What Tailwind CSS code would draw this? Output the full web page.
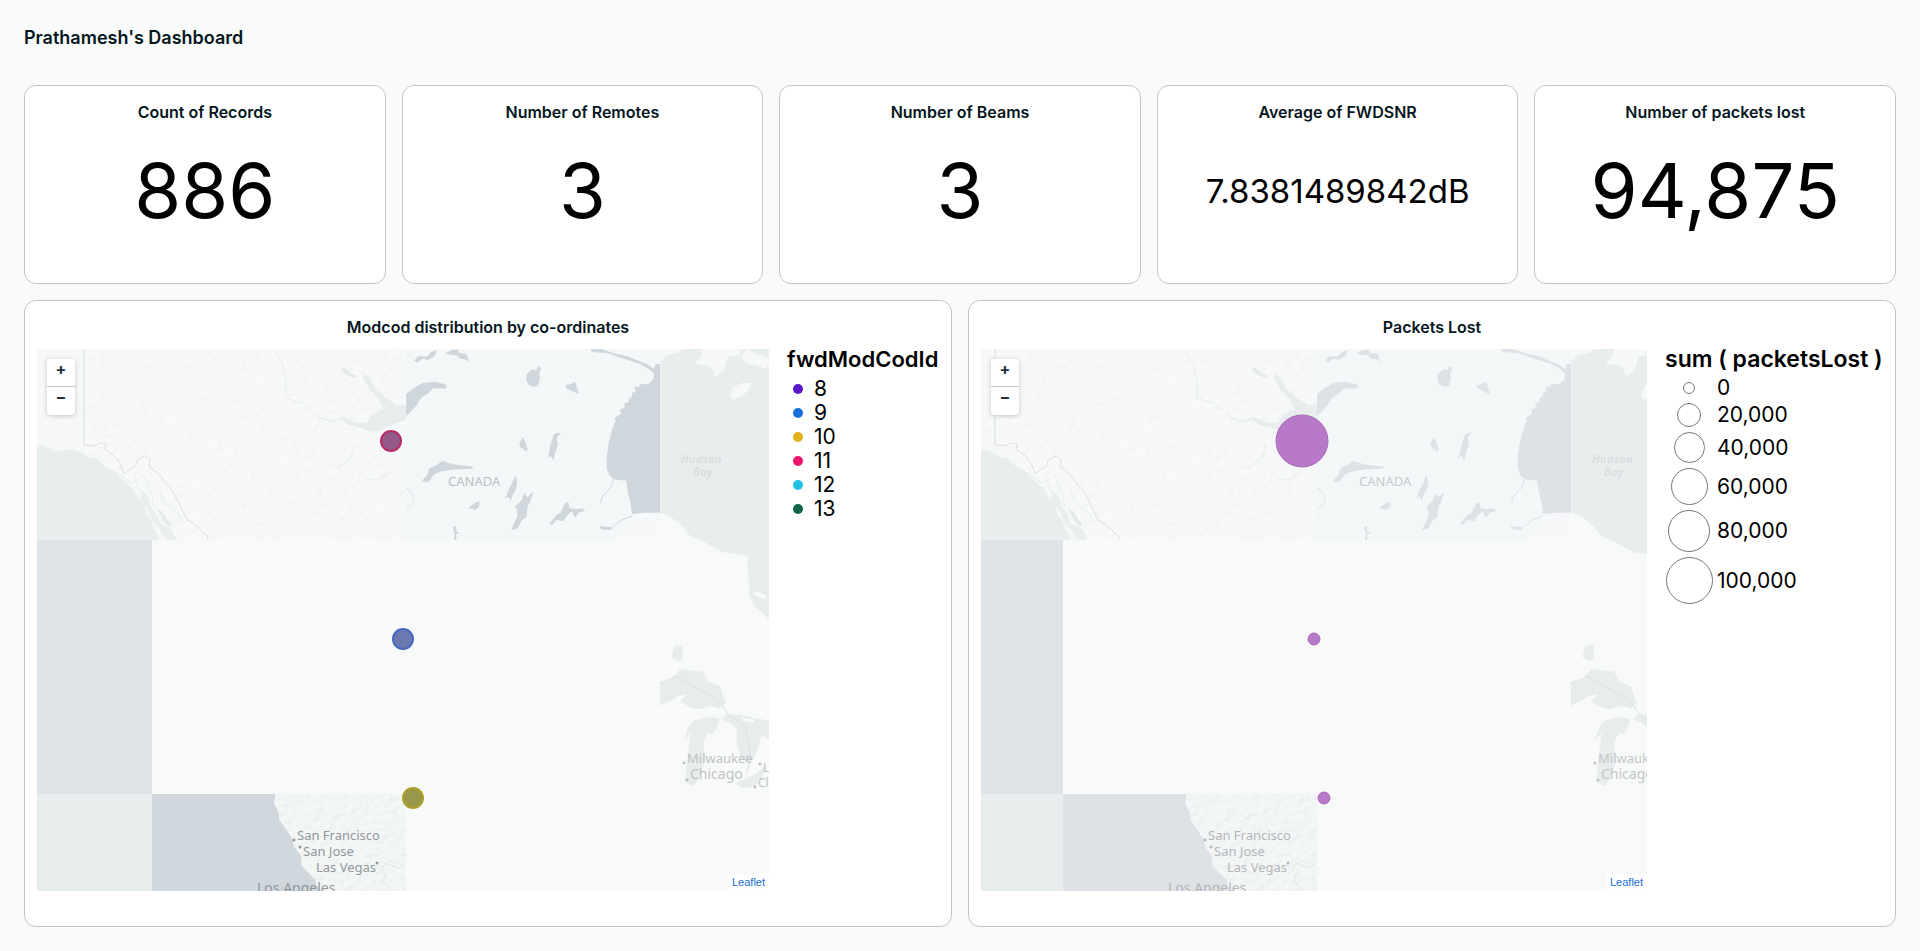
<!DOCTYPE html>
<html lang="en">
  <head>
    <meta charset="UTF-8" />
    <meta name="viewport" content="width=device-width, initial-scale=1.0" />
    <title>Prathamesh's Dashboard</title>
    <script src="https://cdn.jsdelivr.net/npm/@tailwindcss/browser@4"></script>
  </head>
  <body
    class="bg-[#f9fbfa] min-h-screen flex flex-col px-6 pb-6 font-['Inter',sans-serif] text-black"
  >
    <!-- Base map, shared by both charts. currentColor = open water -->
    <svg class="absolute w-0 h-0" aria-hidden="true">
      <defs>
        <filter id="relief" x="0" y="0" width="100%" height="100%">
          <feTurbulence type="fractalNoise" baseFrequency="0.12 0.16" numOctaves="4" seed="4" />
          <feDiffuseLighting lighting-color="#ffffff" surfaceScale="3" result="light">
            <feDistantLight azimuth="225" elevation="60" />
          </feDiffuseLighting>
          <feComposite in="light" in2="SourceAlpha" operator="in" />
        </filter>
        <clipPath id="clip-nw"><rect width="369" height="191" /></clipPath>
        <clipPath id="clip-ne"><rect x="369" width="254" height="191" /></clipPath>
        <clipPath id="clip-east"><rect x="623" width="109" height="542" /></clipPath>
        <clipPath id="clip-sw"><rect x="115" y="445" width="254" height="97" /></clipPath>

        <symbol id="basemap" viewBox="0 0 732 542">
          <rect width="732" height="542" fill="#f8faf9" />

          <!-- north west: Alaska, Yukon, British Columbia -->
          <g clip-path="url(#clip-nw)">
            <rect width="369" height="191" fill="#f7f9fa" />
            <rect width="369" height="191" filter="url(#relief)" opacity=".05" />
            <g transform="translate(-17 -59) scale(.33333)">
              <path
                d="M50 462L80 470L105 487L150 478L185 485L200 500L232 505L245 522L285 545L302 565L325 585L342 600L352 625L372 645L378 668L392 690L405 720L420 750H50Z"
                fill="#e8eded"
              />
              <path
                d="M365 600L385 620L392 650L410 675L420 700L455 720L470 750H440L425 725L400 700L385 660L360 630Z"
                fill="#eaeeef"
              />
              <path
                d="M412 655L430 668L442 690L455 700L448 712L428 690Z"
                fill="#e4e9ea"
              />
              <path
                d="M192 175V465L228 466L240 458L258 462L255 478L285 500L300 520L312 550L345 530L352 510L375 497L390 508L388 530L420 555L440 585L455 600L475 635L500 688L530 708L563 740V750"
                fill="none"
                stroke="#dcdfe1"
                stroke-width="3"
              />
              <path
                d="M760 180L785 215L797 265L798 325L850 340L880 362"
                fill="none"
                stroke="#e9edef"
                stroke-width="3"
              />
              <path
                d="M345 560L362 610L385 640M370 555L395 610L400 650M300 555L335 580L350 570M420 600L432 640L470 665L490 700"
                fill="none"
                stroke="#e9edee"
                stroke-width="3"
              />
              <path
                d="M880 360L900 382L935 392L968 380L1000 395L1040 400L1055 375L1090 358L1078 330L1050 300L1040 282L1028 262L1035 250L1052 268L1062 292L1095 322L1130 345L1158 345V390L1120 402L1090 418L1055 426L1030 415L985 405L965 388L935 397L898 386Z"
                fill="#e8eced"
              />
              <path
                d="M962 238L972 233L990 248L1012 260L998 262L975 252Z"
                fill="#e4e8e9"
              />
              <path
                d="M1002 460Q1005 510 945 535M1110 540Q1090 580 1040 565"
                fill="none"
                stroke="#eceff0"
                stroke-width="4"
              />
            </g>
          </g>

          <!-- Nunavut to Hudson Bay -->
          <g clip-path="url(#clip-ne)">
            <rect x="369" width="254" height="191" fill="#f4f7f8" />
            <g transform="translate(363 -59) scale(.33333)" fill="currentColor">
              <path
                d="M18 312L40 295L70 278L105 275L140 284L138 296L100 295L85 310L65 322L50 345L35 362L18 378Z"
              />
              <path
                d="M42 212L55 198L80 200L95 185L110 180L104 198L85 210L68 206L52 218Z"
              />
              <path
                d="M135 190L155 180L172 178L178 188L200 192L207 218L196 208L180 206L170 196L150 194Z"
              />
              <path
                d="M380 252L388 245L396 238L410 240L414 228L424 234L418 250L420 268L413 288L398 290L386 284L379 270Z"
              />
              <path
                d="M496 286L512 282L525 275L530 292L537 312L522 306L510 300L500 296Z"
              />
              <path
                d="M66 572L82 555L88 535L110 525L128 512L148 520L170 524L195 527L220 530L216 536L180 538L150 540L120 545L100 555L88 574L72 577Z"
              />
              <path
                d="M358 462L368 440L376 455L383 478L378 486L370 476L362 474Z"
              />
              <path
                d="M450 470L462 432L482 427L470 445L474 465L468 480L460 512L452 498L442 503L448 485Z"
              />
              <path
                d="M316 625L325 600L336 580L346 556L352 575L348 600L340 610L332 632L326 620Z"
              />
              <path
                d="M205 657L215 645L238 632L238 650L225 660L214 656Z"
              />
              <path
                d="M345 650L366 630L372 608L382 622L400 605L392 632L382 650L380 680L366 690L352 716L334 720L342 700L352 680L352 662Z"
              />
              <path
                d="M448 700L470 675L482 668L495 640L505 636L508 655L530 658L545 654L556 663L535 668L525 683L515 664L502 676L490 694L470 690L455 706Z"
              />
              <path
                d="M158 712L168 708L170 725L182 730L168 732L170 750H162L164 730Z"
              />
              <path
                d="M572 176L605 177L640 190L680 198L710 210L740 222L762 236L768 222H781V690L697 678L692 640L684 610L678 572L640 568L628 556L620 535V500L626 460L636 420L648 390L642 386L664 370L660 358L674 354L673 340L686 336L686 324L696 320L696 308L706 306L704 288L716 292L722 283L745 282L760 268L762 250L745 236L720 222L690 212L660 203L625 190L575 186Z"
              />
              <path
                d="M640 568Q640 590 615 610Q602 622 602 640M600 712L632 718L660 692L697 678"
                fill="none"
                stroke="currentColor"
                stroke-width="3"
              />
              <path
                d="M600 708L635 712L628 720L604 718Z"
              />
              <path
                d="M692 690L697 672L735 668L781 668V750H640Z"
                fill="#f6f8f9"
              />
              <path
                d="M18 595Q40 605 42 630Q38 652 18 655"
                fill="none"
                stroke="#e6eaec"
                stroke-width="4"
              />
            </g>
          </g>

          <!-- Hudson Bay and the Great Lakes -->
          <g clip-path="url(#clip-east)">
            <g transform="translate(363 -59) scale(.33333)">
              <path
                d="M781 176H1110V840H1042L1045 800L1020 795L965 786L920 760L870 738L850 710L825 690L800 676L781 668Z"
                fill="#e8eded"
              />
              <path
                d="M781 176H850L835 188L800 194L781 215ZM910 176H1022L1020 195L985 198L978 215L972 240L945 262L935 232L915 226L882 220L905 200ZM1040 176L1070 192L1108 205V225L1092 236L1070 226L1045 222L1025 205Z"
                fill="#f6f9f8"
              />
              <path
                d="M1000 290L1030 278L1056 280L1045 300L1028 318L998 330L990 315Z"
                fill="#f6f9f8"
              />
            </g>
            <g transform="translate(603 211) scale(.33333)" fill="#e8ecec">
              <path
                d="M322 0L326 40L328 105L345 140L365 155L388 180V0Z"
              />
              <path
                d="M335 100L355 95L375 105L382 118L360 115Z"
                fill="#f8faf9"
              />
              <path
                d="M102 258L128 256L128 300L112 304L95 292Z"
              />
              <path
                d="M60 368L88 362L105 345L120 328L150 330L190 335L205 365L240 378L248 405L258 430L240 445L210 438L180 448L155 445L130 430L120 425L142 402L112 408L100 418L60 438Z"
              />
              <path
                d="M132 540L145 500L165 480L205 472L238 475L230 505L215 525L205 518L190 545L195 600L175 660L160 678L135 665L142 600L148 545L152 520Z"
              />
              <path
                d="M245 478L262 462L300 465L335 472L388 482V540L365 525L355 560L340 600L322 608L300 590L290 545L290 505L270 488Z"
              />
              <path
                d="M305 472L345 480L340 490L312 482Z"
                fill="#f8faf9"
              />
              <path
                d="M285 668L320 655L350 640L365 625L380 620L365 655L345 680L305 685Z"
              />
              <path
                d="M60 368L110 350L160 378L240 425L262 460L315 500L325 545L332 590L320 640"
                fill="none"
                stroke="#dde0e1"
                stroke-width="3"
              />
            </g>
          </g>

          <!-- Pacific tiles and California -->
          <rect y="191" width="115" height="254" fill="#dee3e7" />
          <rect y="445" width="115" height="97" fill="#e7ecec" />
          <g clip-path="url(#clip-sw)">
            <rect x="115" y="445" width="254" height="97" fill="#f4f7f7" />
            <rect x="232" y="445" width="137" height="97" filter="url(#relief)" opacity=".1" />
            <g transform="translate(-17 411) scale(.33333)">
              <path
                d="M396 100H767L762 130L775 155L778 180L800 210L818 240L822 262L842 285L845 318L862 335L885 358L888 375L905 395H396Z"
                fill="currentColor"
              />
              <path
                d="M1085 330L1095 310L1135 325L1155 310M1085 330L1095 345L1090 365L1118 393M970 393L1000 375"
                fill="none"
                stroke="#e0e4e6"
                stroke-width="3"
              />
            </g>
          </g>
        </symbol>
      </defs>
    </svg>

    <header class="h-[85px] pt-6">
      <h1 class="text-lg leading-7 font-semibold text-[#061621]">
        Prathamesh's Dashboard
      </h1>
    </header>

    <main class="flex-1 flex flex-col gap-4">
      <!-- Number cards -->
      <section class="grid grid-cols-5 gap-4">
        <article class="h-[199px] bg-white border border-[#c1c7c6] rounded-xl text-center">
          <h2 class="mt-4 text-base leading-5 font-semibold text-[#061621]">Count of Records</h2>
          <p class="h-[136px] flex items-center justify-center text-[76px]">886</p>
        </article>
        <article class="h-[199px] bg-white border border-[#c1c7c6] rounded-xl text-center">
          <h2 class="mt-4 text-base leading-5 font-semibold text-[#061621]">Number of Remotes</h2>
          <p class="h-[136px] flex items-center justify-center text-[76px]">3</p>
        </article>
        <article class="h-[199px] bg-white border border-[#c1c7c6] rounded-xl text-center">
          <h2 class="mt-4 text-base leading-5 font-semibold text-[#061621]">Number of Beams</h2>
          <p class="h-[136px] flex items-center justify-center text-[76px]">3</p>
        </article>
        <article class="h-[199px] bg-white border border-[#c1c7c6] rounded-xl text-center">
          <h2 class="mt-4 text-base leading-5 font-semibold text-[#061621]">Average of FWDSNR</h2>
          <p class="h-[140px] flex items-center justify-center text-[33px]">7.8381489842dB</p>
        </article>
        <article class="h-[199px] bg-white border border-[#c1c7c6] rounded-xl text-center">
          <h2 class="mt-4 text-base leading-5 font-semibold text-[#061621]">Number of packets lost</h2>
          <p class="h-[136px] flex items-center justify-center text-[76px]">94,875</p>
        </article>
      </section>

      <!-- Map cards -->
      <section class="flex-1 grid grid-cols-2 gap-4">
        <article class="bg-white border border-[#c1c7c6] rounded-xl px-3 pt-4 pb-[35px] flex flex-col">
          <h2 class="mb-3 text-base leading-5 font-semibold text-[#061621] text-center">
            Modcod distribution by co-ordinates
          </h2>
          <div class="flex-1 flex gap-[18px]">
            <div class="relative flex-1 min-w-0 overflow-hidden">
              <svg
                class="absolute inset-0 w-full h-full text-[#cfd6dc] font-['Noto_Sans',sans-serif]"
                viewBox="0 0 732 542"
                preserveAspectRatio="xMidYMid slice"
              >
                <use href="#basemap" width="732" height="542" />
                <g class="text-[13px]" fill="#b9bfc4">
                  <text x="411" y="137">CANADA</text>
                  <text x="644" y="114" class="italic text-[11px] tracking-wider" fill="#d3d9da">Hudson</text>
                  <text x="656" y="127" class="italic text-[11px] tracking-wider" fill="#d3d9da">Bay</text>
                </g>
                <g class="text-[13px]" fill="#bfc3c4">
                  <text x="650" y="414">Milwaukee</text>
                  <text x="653" y="430" class="text-sm">Chicago</text>
                  <text x="726" y="423" class="text-xs">London</text>
                  <text x="721" y="438" class="text-xs">Cleveland</text>
                  <circle cx="647" cy="414" r="1.5" />
                  <circle cx="650" cy="431" r="1.5" />
                  <circle cx="723" cy="415" r="1.5" />
                  <circle cx="718" cy="438" r="1.5" />
                </g>
                <g class="text-[13px]" fill="#92979b">
                  <text x="260" y="491">San Francisco</text>
                  <text x="266" y="507">San Jose</text>
                  <text x="279" y="523">Las Vegas</text>
                  <text x="220" y="544" class="text-sm">Los Angeles</text>
                  <circle cx="257" cy="491" r="1.5" />
                  <circle cx="263" cy="498" r="1.5" />
                  <circle cx="340" cy="514" r="1.5" />
                </g>
                <g stroke-width="2">
                  <circle cx="354" cy="92" r="10" fill="#955a8a" stroke="#b52a66" />
                  <circle cx="366" cy="290" r="10" fill="#6c79b0" stroke="#4668c0" />
                  <circle cx="376" cy="449" r="10" fill="#999749" stroke="#aca02a" />
                </g>
              </svg>
              <div class="absolute left-[10px] top-[10px] w-7 rounded-sm bg-white shadow-[0_1px_5px_rgba(0,0,0,0.2)] text-base leading-5 font-bold text-[#21313c]">
                <button type="button" aria-label="Zoom in" class="block w-full h-7 pb-2 border-b border-[#c6c9c9]">+</button>
                <button type="button" aria-label="Zoom out" class="block w-full h-7 pb-2">−</button>
              </div>
              <a href="#" class="absolute right-0 bottom-0 bg-white/70 px-1 text-[11px] leading-[17px] font-['Liberation_Sans',sans-serif] text-[#1a6fd0]">Leaflet</a>
            </div>
            <div class="w-[152px]">
              <h3 class="text-[22px] leading-5 font-semibold whitespace-nowrap">fwdModCodId</h3>
              <ul class="mt-2 pl-[6px] text-[21px] leading-6">
                <li class="flex items-center gap-[11px]"><span class="size-[10px] rounded-full bg-[#5b16c9]"></span>8</li>
                <li class="flex items-center gap-[11px]"><span class="size-[10px] rounded-full bg-[#1a6fdc]"></span>9</li>
                <li class="flex items-center gap-[11px]"><span class="size-[10px] rounded-full bg-[#e0b01c]"></span>10</li>
                <li class="flex items-center gap-[11px]"><span class="size-[10px] rounded-full bg-[#ee146c]"></span>11</li>
                <li class="flex items-center gap-[11px]"><span class="size-[10px] rounded-full bg-[#1fc2e2]"></span>12</li>
                <li class="flex items-center gap-[11px]"><span class="size-[10px] rounded-full bg-[#106548]"></span>13</li>
              </ul>
            </div>
          </div>
        </article>

        <article class="bg-white border border-[#c1c7c6] rounded-xl px-3 pt-4 pb-[35px] flex flex-col">
          <h2 class="mb-3 text-base leading-5 font-semibold text-[#061621] text-center">
            Packets Lost
          </h2>
          <div class="flex-1 flex gap-[18px]">
            <div class="relative flex-1 min-w-0 overflow-hidden">
              <svg
                class="absolute inset-0 w-full h-full text-[#dee2e7] font-['Noto_Sans',sans-serif]"
                viewBox="0 0 732 542"
                preserveAspectRatio="xMidYMid slice"
              >
                <use href="#basemap" width="732" height="542" />
                <g class="text-[13px]" fill="#c6cbcf">
                  <text x="411" y="137">CANADA</text>
                  <text x="644" y="114" class="italic text-[11px] tracking-wider" fill="#d3d9da">Hudson</text>
                  <text x="656" y="127" class="italic text-[11px] tracking-wider" fill="#d3d9da">Bay</text>
                </g>
                <g class="text-[13px]" fill="#c3c7c8">
                  <text x="650" y="414">Milwaukee</text>
                  <text x="653" y="430" class="text-sm">Chicago</text>
                  <circle cx="647" cy="414" r="1.5" />
                  <circle cx="650" cy="431" r="1.5" />
                </g>
                <g class="text-[13px]" fill="#b2b6b9">
                  <text x="260" y="491">San Francisco</text>
                  <text x="266" y="507">San Jose</text>
                  <text x="279" y="523">Las Vegas</text>
                  <text x="220" y="544" class="text-sm">Los Angeles</text>
                  <circle cx="257" cy="491" r="1.5" />
                  <circle cx="263" cy="498" r="1.5" />
                  <circle cx="340" cy="514" r="1.5" />
                </g>
                <g fill="#b87ac8" stroke="#a868ba">
                  <circle cx="354" cy="92" r="26" />
                  <circle cx="366" cy="290" r="6" />
                  <circle cx="376" cy="449" r="6" />
                </g>
              </svg>
              <div class="absolute left-[10px] top-[10px] w-7 rounded-sm bg-white shadow-[0_1px_5px_rgba(0,0,0,0.2)] text-base leading-5 font-bold text-[#21313c]">
                <button type="button" aria-label="Zoom in" class="block w-full h-7 pb-2 border-b border-[#c6c9c9]">+</button>
                <button type="button" aria-label="Zoom out" class="block w-full h-7 pb-2">−</button>
              </div>
              <a href="#" class="absolute right-0 bottom-0 bg-white/70 px-1 text-[11px] leading-[17px] font-['Liberation_Sans',sans-serif] text-[#1a6fd0]">Leaflet</a>
            </div>
            <div class="w-[218px]">
              <h3 class="text-[23px] leading-5 font-semibold whitespace-nowrap">sum ( packetsLost )</h3>
              <ul class="mt-[9px] flex flex-col gap-[5px] text-[21px] leading-5">
                <li class="flex items-center gap-1"><span class="w-12 flex justify-center"><span class="size-3 rounded-full border border-[#777]"></span></span>0</li>
                <li class="flex items-center gap-1"><span class="w-12 flex justify-center"><span class="size-6 rounded-full border border-[#777]"></span></span>20,000</li>
                <li class="flex items-center gap-1"><span class="w-12 flex justify-center"><span class="size-[31px] rounded-full border border-[#777]"></span></span>40,000</li>
                <li class="flex items-center gap-1"><span class="w-12 flex justify-center"><span class="size-[37px] rounded-full border border-[#777]"></span></span>60,000</li>
                <li class="flex items-center gap-1"><span class="w-12 flex justify-center"><span class="size-[42px] rounded-full border border-[#777]"></span></span>80,000</li>
                <li class="flex items-center gap-1"><span class="w-12 flex justify-center"><span class="size-[47px] rounded-full border border-[#777]"></span></span>100,000</li>
              </ul>
            </div>
          </div>
        </article>
      </section>
    </main>
  </body>
</html>
